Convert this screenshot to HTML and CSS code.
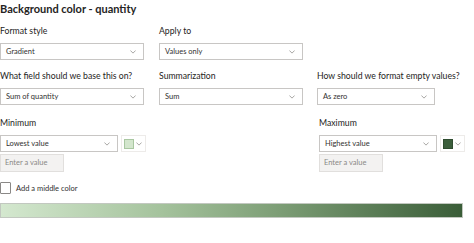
FILE: index.html
```html
<!DOCTYPE html>
<html lang="en">
<head>
    <meta charset="UTF-8">
    <meta name="viewport" content="width=device-width, initial-scale=1.0">
    <title>Background color - quantity</title>
    <link rel="stylesheet" href="styles.css">
</head>
<body>
    <div class="panel">
        <div class="title">Background color - quantity</div>

        <div class="row row-top">
            <div class="field">
                <div class="label">Format style</div>
                <div class="select wide">
                    <span>Gradient</span>
                    <svg class="chevron" viewBox="0 0 8 5"><path d="M0.5 0.5 L4 4 L7.5 0.5" /></svg>
                </div>
            </div>
            <div class="field">
                <div class="label">Apply to</div>
                <div class="select wide">
                    <span>Values only</span>
                    <svg class="chevron" viewBox="0 0 8 5"><path d="M0.5 0.5 L4 4 L7.5 0.5" /></svg>
                </div>
            </div>
        </div>

        <div class="row row-mid">
            <div class="field">
                <div class="label">What field should we base this on?</div>
                <div class="select wide">
                    <span>Sum of quantity</span>
                    <svg class="chevron" viewBox="0 0 8 5"><path d="M0.5 0.5 L4 4 L7.5 0.5" /></svg>
                </div>
            </div>
            <div class="field">
                <div class="label">Summarization</div>
                <div class="select wide">
                    <span>Sum</span>
                    <svg class="chevron" viewBox="0 0 8 5"><path d="M0.5 0.5 L4 4 L7.5 0.5" /></svg>
                </div>
            </div>
            <div class="field">
                <div class="label">How should we format empty values?</div>
                <div class="select narrow">
                    <span>As zero</span>
                    <svg class="chevron" viewBox="0 0 8 5"><path d="M0.5 0.5 L4 4 L7.5 0.5" /></svg>
                </div>
            </div>
        </div>

        <div class="row row-range">
            <div class="field">
                <div class="label">Minimum</div>
                <div class="picker-line">
                    <div class="select narrow">
                        <span>Lowest value</span>
                        <svg class="chevron" viewBox="0 0 8 5"><path d="M0.5 0.5 L4 4 L7.5 0.5" /></svg>
                    </div>
                    <div class="swatch-btn">
                        <div class="swatch light"></div>
                        <svg class="chevron" viewBox="0 0 8 5"><path d="M0.5 0.5 L4 4 L7.5 0.5" /></svg>
                    </div>
                </div>
                <div class="value-box">Enter a value</div>
            </div>
            <div class="field">
                <div class="label">Maximum</div>
                <div class="picker-line">
                    <div class="select narrow">
                        <span>Highest value</span>
                        <svg class="chevron" viewBox="0 0 8 5"><path d="M0.5 0.5 L4 4 L7.5 0.5" /></svg>
                    </div>
                    <div class="swatch-btn">
                        <div class="swatch dark"></div>
                        <svg class="chevron" viewBox="0 0 8 5"><path d="M0.5 0.5 L4 4 L7.5 0.5" /></svg>
                    </div>
                </div>
                <div class="value-box">Enter a value</div>
            </div>
        </div>

        <label class="check">
            <span class="box"></span>
            <span>Add a middle color</span>
        </label>

        <div class="gradient-bar"></div>
    </div>
</body>
</html>
```

FILE: styles.css
```css
body {
    margin: 0;
    padding: 0;
    background-color: #ffffff;
    color: #252423;
    font-family: Lato, "Open Sans", sans-serif;
}

.panel {
    width: 474px;
    padding: 1px 0 0 0;
}

.title {
    font-size: 11px;
    font-weight: 700;
    line-height: 16px;
    margin-bottom: 7px;
}

.row {
    display: grid;
}

.row-top {
    grid-template-columns: 159px 144px;
    margin-bottom: 9px;
}

.row-mid {
    grid-template-columns: 159px 158px 118px;
    margin-bottom: 11px;
}

.row-range {
    grid-template-columns: 319px 150px;
    margin-bottom: 10px;
}

.label {
    font-size: 8.7px;
    line-height: 13px;
    margin-bottom: 6px;
    white-space: nowrap;
}

.select {
    height: 15px;
    border: 1px solid #c8c6c4;
    display: flex;
    align-items: center;
    justify-content: space-between;
    padding: 0 7px 0 5px;
    font-size: 7.5px;
    color: #323130;
    background-color: #ffffff;
}

.select.wide {
    width: 130px;
}

.select.narrow {
    width: 104px;
}

.chevron {
    width: 6px;
    height: 4px;
    fill: none;
    stroke: #8a8886;
    stroke-width: 1;
}

.picker-line {
    display: flex;
    align-items: center;
}

.swatch-btn {
    width: 18px;
    height: 15px;
    margin-left: 3px;
    border: 1px solid #edebe9;
    display: flex;
    align-items: center;
    justify-content: space-between;
    padding: 0 3px 0 2px;
}

.swatch {
    width: 8px;
    height: 8px;
}

.swatch.light {
    background-color: #d3e6cd;
    border: 1px solid #a9c7a1;
}

.swatch.dark {
    background-color: #3b5e3b;
    border: 1px solid #2f4c2f;
}

.value-box {
    width: 58px;
    height: 16px;
    margin-top: 2px;
    padding-left: 4px;
    background-color: #f3f2f1;
    border: 1px solid #e1dfdd;
    font-size: 7.5px;
    line-height: 16px;
    color: #8a8886;
}

.check {
    display: flex;
    align-items: center;
    font-size: 7.5px;
    color: #323130;
    margin-bottom: 9px;
}

.check .box {
    width: 9px;
    height: 10px;
    border: 1px solid #8a8886;
    border-radius: 1px;
    margin-right: 5px;
}

.gradient-bar {
    width: 461px;
    height: 13px;
    border: 1px solid #c2c8c0;
    background: linear-gradient(to right, #d4e8cf, #a4c29c 35%, #7d9e76 60%, #3a5d38);
}
```
